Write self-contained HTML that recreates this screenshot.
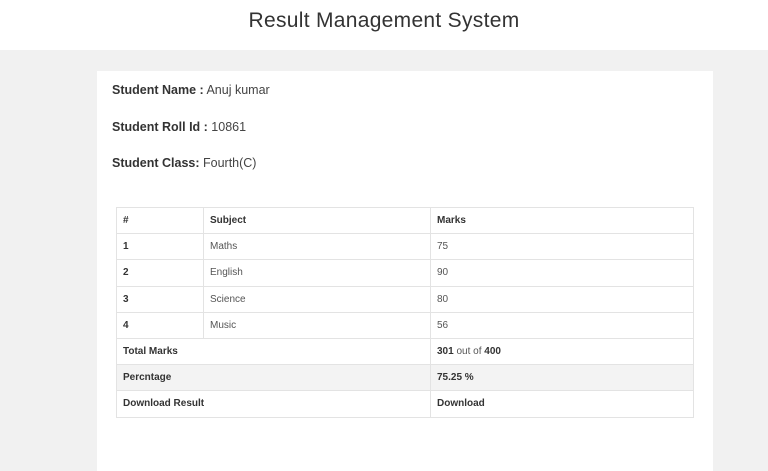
<!DOCTYPE html>
<html><head><meta charset="utf-8"><style>
*{margin:0;padding:0;box-sizing:border-box}
body{width:768px;height:451px;overflow:hidden;background:#f1f1f1;font-family:"Liberation Sans",sans-serif;color:#333}
.hdr{height:50px;background:#fff;text-align:center;font-size:21px;line-height:42px;color:#333;letter-spacing:0.3px}
.card{position:absolute;left:97px;top:71px;width:616px;height:400px;background:#fff}
.info{position:absolute;left:15px;font-size:12.5px;color:#444}
.info b{color:#333}
table{position:absolute;left:19px;top:136px;width:578px;border-collapse:collapse;font-size:10px}
td,th{border:1px solid #e3e3e3;height:26.2px;padding:0 6px;text-align:left;color:#555;font-weight:normal}
th,.b{font-weight:bold;color:#333}
tr.g td{background:#f3f3f3}
</style></head><body>
<div class="hdr">Result Management System</div>
<div class="card">
<div class="info" style="top:12px"><b>Student Name :</b> Anuj kumar</div>
<div class="info" style="top:49px"><b>Student Roll Id :</b> 10861</div>
<div class="info" style="top:85px"><b>Student Class:</b> Fourth(C)</div>
<table>
<tr><th style="width:87px">#</th><th style="width:227px">Subject</th><th>Marks</th></tr>
<tr><td class="b">1</td><td>Maths</td><td>75</td></tr>
<tr><td class="b">2</td><td>English</td><td>90</td></tr>
<tr><td class="b">3</td><td>Science</td><td>80</td></tr>
<tr><td class="b">4</td><td>Music</td><td>56</td></tr>
<tr><td class="b" colspan="2">Total Marks</td><td><b style="color:#333">301</b> out of <b style="color:#333">400</b></td></tr>
<tr class="g"><td class="b" colspan="2">Percntage</td><td class="b">75.25 %</td></tr>
<tr><td class="b" colspan="2">Download Result</td><td class="b">Download</td></tr>
</table>
</div>
</body></html>
